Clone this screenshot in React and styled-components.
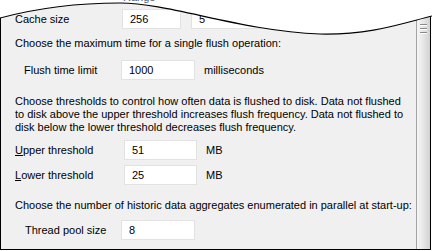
import React from 'react';
import styled, { createGlobalStyle } from 'styled-components';

const Global = createGlobalStyle`
  html, body { margin: 0; padding: 0; background: #fff; }
  body { font-family: "Liberation Sans", Arial, sans-serif; }
`;

const Frame = styled.div`
  position: relative;
  width: 432px;
  height: 251px;
  background: #fff;
  overflow: hidden;
`;

const Panel = styled.div`
  display: flex;
  width: 429px;
  height: 249px;
  background: #f0f0f0;
  border-left: 1px solid #000;
  border-right: 1px solid #000;
  border-bottom: 1px solid #000;
`;

const Content = styled.div`
  flex: 1;
  display: flex;
  flex-direction: column;
  padding-left: 14px;
  font-size: 11px;
  color: #000;
`;

const ColumnHead = styled.div`
  height: 0;
  padding-left: 108px;
  line-height: 11px;
  span {
    position: relative;
    top: -8px;
    z-index: 3;
    color: #4a5a78;
  }
`;

const Row = styled.div`
  display: flex;
  align-items: center;
  height: 20px;
  margin-top: ${p => p.top}px;
  padding-left: ${p => p.indent || 0}px;
`;

const Label = styled.span`
  width: ${p => p.width}px;
  flex: none;
  u { text-decoration: underline; }
`;

const Field = styled.div`
  box-sizing: border-box;
  width: ${p => p.width}px;
  height: 20px;
  background: #fff;
  border: 1px solid #e2e2e2;
  padding: 3px 0 0 7px;
  line-height: 13px;
  flex: none;
`;

const Unit = styled.span`
  margin-left: ${p => p.gap}px;
`;

const Para = styled.p`
  margin: ${p => p.top}px 0 0 0;
  line-height: 13px;
  white-space: pre-line;
`;

const Scroll = styled.div`
  width: 13px;
  flex: none;
  border-left: 1px solid #a3a3a3;
  background: linear-gradient(to right, #f6f6f6 0%, #e9e9e9 40%, #d2d2d2 100%);
  display: flex;
  flex-direction: column;
  align-items: center;
  padding-top: 24px;
  gap: 2px;
`;

const Grip = styled.span`
  width: 7px;
  height: 1px;
  background: #8a8a8a;
  border-bottom: 1px solid #fff;
`;

const Tear = styled.svg`
  position: absolute;
  left: 0;
  top: 0;
  z-index: 2;
`;

export default function App() {
  return (
    <>
      <Global />
      <Frame>
        <Panel>
          <Content>
            <ColumnHead><span>Range</span></ColumnHead>
            <Row top={9}>
              <Label width={107}>Cache size</Label>
              <Field width={59}>256</Field>
              <Field width={70} style={{ marginLeft: 10 }}>5</Field>
            </Row>
            <Para top={8}>Choose the maximum time for a single flush operation:</Para>
            <Row top={10} indent={9}>
              <Label width={97}>Flush time limit</Label>
              <Field width={74}>1000</Field>
              <Unit gap={9}>milliseconds</Unit>
            </Row>
            <Para top={15}>
              {'Choose thresholds to control how often data is flushed to disk.  Data not flushed\nto disk above the upper threshold increases flush frequency. Data not flushed to\ndisk below the lower threshold decreases flush frequency.'}
            </Para>
            <Row top={6} indent={-1}>
              <Label width={109}><u>U</u>pper threshold</Label>
              <Field width={73}>51</Field>
              <Unit gap={9}>MB</Unit>
            </Row>
            <Row top={5} indent={-1}>
              <Label width={109}><u>L</u>ower threshold</Label>
              <Field width={73}>25</Field>
              <Unit gap={9}>MB</Unit>
            </Row>
            <Para top={14}>Choose the number of historic data aggregates enumerated in parallel at start-up:</Para>
            <Row top={8} indent={10}>
              <Label width={96}>Thread pool size</Label>
              <Field width={74}>8</Field>
            </Row>
          </Content>
          <Scroll>
            <Grip />
            <Grip />
            <Grip />
          </Scroll>
        </Panel>
        <Tear width="432" height="40" viewBox="0 0 432 40">
          <path
            d="M0,18 C30,10 70,3 120,3 C170,3 240,31 320,34 C370,35 400,24 432,16 L432,0 L0,0 Z"
            fill="#fff"
          />
          <path
            d="M0,18 C30,10 70,3 120,3 C170,3 240,31 320,34 C370,35 400,24 432,16"
            fill="none"
            stroke="#000"
            strokeWidth="1.2"
          />
        </Tear>
      </Frame>
    </>
  );
}
